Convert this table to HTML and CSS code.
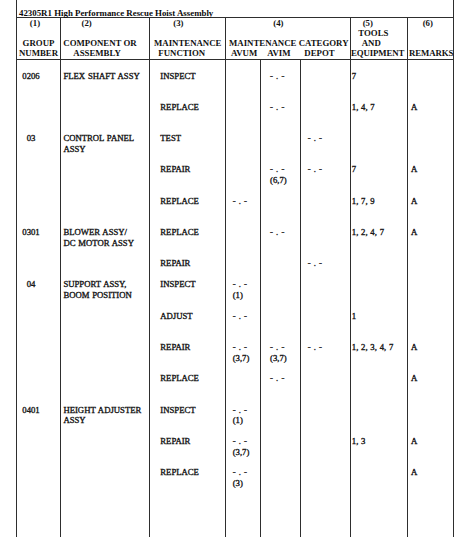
FILE: index.html
```
<!DOCTYPE html>
<html>
<head>
<meta charset="utf-8">
<title>42305R1 High Performance Rescue Hoist Assembly</title>
<link rel="stylesheet" href="styles.css">
</head>
<body>
<div class="sheet">
  <div class="title">42305R1 High Performance Rescue Hoist Assembly</div>
  <div class="head">
    <div class="h h1"><div class="l1">(1)</div><div class="l2"></div><div class="l3">GROUP</div><div class="l4">NUMBER</div></div>
    <div class="h h2"><div class="l1">(2)</div><div class="l2"></div><div class="l3">COMPONENT OR</div><div class="l4">ASSEMBLY</div></div>
    <div class="h h3"><div class="l1">(3)</div><div class="l2"></div><div class="l3">MAINTENANCE</div><div class="l4">FUNCTION</div></div>
    <div class="h h4"><div class="l1">(4)</div><div class="l2"></div><div class="l3">MAINTENANCE CATEGORY</div><div class="l4 subs"><span class="s1">AVUM</span><span class="s2">AVIM</span><span class="s3">DEPOT</span></div></div>
    <div class="h h5"><div class="l1">(5)</div><div class="l2">TOOLS</div><div class="l3">AND</div><div class="l4">EQUIPMENT</div></div>
    <div class="h h6"><div class="l1">(6)</div><div class="l2"></div><div class="l3"></div><div class="l4">REMARKS</div></div>
  </div>
  <div class="body">
    <div class="row">
      <div class="c c1"><span class="num">0206</span></div>
      <div class="c c2">FLEX SHAFT ASSY</div>
      <div class="c c3">INSPECT</div>
      <div class="c c4"></div>
      <div class="c c5">- . -</div>
      <div class="c c6"></div>
      <div class="c c7">7</div>
      <div class="c c8"></div>
    </div>
    <div class="row">
      <div class="c c1"></div>
      <div class="c c2"></div>
      <div class="c c3">REPLACE</div>
      <div class="c c4"></div>
      <div class="c c5">- . -</div>
      <div class="c c6"></div>
      <div class="c c7">1, 4, 7</div>
      <div class="c c8">A</div>
    </div>
    <div class="row">
      <div class="c c1"><span class="num">03</span></div>
      <div class="c c2">CONTROL PANEL<br>ASSY</div>
      <div class="c c3">TEST</div>
      <div class="c c4"></div>
      <div class="c c5"></div>
      <div class="c c6">- . -</div>
      <div class="c c7"></div>
      <div class="c c8"></div>
    </div>
    <div class="row">
      <div class="c c1"></div>
      <div class="c c2"></div>
      <div class="c c3">REPAIR</div>
      <div class="c c4"></div>
      <div class="c c5">- . -<br>(6,7)</div>
      <div class="c c6">- . -</div>
      <div class="c c7">7</div>
      <div class="c c8">A</div>
    </div>
    <div class="row">
      <div class="c c1"></div>
      <div class="c c2"></div>
      <div class="c c3">REPLACE</div>
      <div class="c c4">- . -</div>
      <div class="c c5"></div>
      <div class="c c6"></div>
      <div class="c c7">1, 7, 9</div>
      <div class="c c8">A</div>
    </div>
    <div class="row">
      <div class="c c1"><span class="num">0301</span></div>
      <div class="c c2">BLOWER ASSY/<br>DC MOTOR ASSY</div>
      <div class="c c3">REPLACE</div>
      <div class="c c4"></div>
      <div class="c c5">- . -</div>
      <div class="c c6"></div>
      <div class="c c7">1, 2, 4, 7</div>
      <div class="c c8">A</div>
    </div>
    <div class="row short">
      <div class="c c1"></div>
      <div class="c c2"></div>
      <div class="c c3">REPAIR</div>
      <div class="c c4"></div>
      <div class="c c5"></div>
      <div class="c c6">- . -</div>
      <div class="c c7"></div>
      <div class="c c8"></div>
    </div>
    <div class="row">
      <div class="c c1"><span class="num">04</span></div>
      <div class="c c2">SUPPORT ASSY,<br>BOOM POSITION</div>
      <div class="c c3">INSPECT</div>
      <div class="c c4">- . -<br>(1)</div>
      <div class="c c5"></div>
      <div class="c c6"></div>
      <div class="c c7"></div>
      <div class="c c8"></div>
    </div>
    <div class="row">
      <div class="c c1"></div>
      <div class="c c2"></div>
      <div class="c c3">ADJUST</div>
      <div class="c c4">- . -</div>
      <div class="c c5"></div>
      <div class="c c6"></div>
      <div class="c c7">1</div>
      <div class="c c8"></div>
    </div>
    <div class="row">
      <div class="c c1"></div>
      <div class="c c2"></div>
      <div class="c c3">REPAIR</div>
      <div class="c c4">- . -<br>(3,7)</div>
      <div class="c c5">- . -<br>(3,7)</div>
      <div class="c c6">- . -</div>
      <div class="c c7">1, 2, 3, 4, 7</div>
      <div class="c c8">A</div>
    </div>
    <div class="row">
      <div class="c c1"></div>
      <div class="c c2"></div>
      <div class="c c3">REPLACE</div>
      <div class="c c4"></div>
      <div class="c c5">- . -</div>
      <div class="c c6"></div>
      <div class="c c7"></div>
      <div class="c c8">A</div>
    </div>
    <div class="row">
      <div class="c c1"><span class="num">0401</span></div>
      <div class="c c2">HEIGHT ADJUSTER<br>ASSY</div>
      <div class="c c3">INSPECT</div>
      <div class="c c4">- . -<br>(1)</div>
      <div class="c c5"></div>
      <div class="c c6"></div>
      <div class="c c7"></div>
      <div class="c c8"></div>
    </div>
    <div class="row">
      <div class="c c1"></div>
      <div class="c c2"></div>
      <div class="c c3">REPAIR</div>
      <div class="c c4">- . -<br>(3,7)</div>
      <div class="c c5"></div>
      <div class="c c6"></div>
      <div class="c c7">1, 3</div>
      <div class="c c8">A</div>
    </div>
    <div class="row">
      <div class="c c1"></div>
      <div class="c c2"></div>
      <div class="c c3">REPLACE</div>
      <div class="c c4">- . -<br>(3)</div>
      <div class="c c5"></div>
      <div class="c c6"></div>
      <div class="c c7"></div>
      <div class="c c8">A</div>
    </div>
    <div class="row fill">
      <div class="c c1"></div>
      <div class="c c2"></div>
      <div class="c c3"></div>
      <div class="c c4"></div>
      <div class="c c5"></div>
      <div class="c c6"></div>
      <div class="c c7"></div>
      <div class="c c8"></div>
    </div>
  </div>
</div>
</body>
</html>
```

FILE: styles.css
```
* {
  box-sizing: border-box;
  margin: 0;
  padding: 0;
}

html, body {
  background: #ffffff;
}

body {
  margin: 0;
  font-family: "Liberation Serif", "Times New Roman", serif;
  color: #151515;
}

.sheet {
  margin-left: 16px;
  width: 438px;
  height: 537px;
  border-left: 1px solid #2e2e2e;
  border-right: 1px solid #2e2e2e;
}

.title {
  height: 18px;
  padding: 7.6px 0 0 2px;
  border-bottom: 1px solid #2e2e2e;
  font-weight: bold;
  font-size: 8.85px;
  line-height: 10px;
  white-space: nowrap;
  color: #0c0c0c;
}

/* header */
.head {
  display: grid;
  grid-template-columns: 44px 89px 76px 125px 57px 45px;
  height: 42px;
  border-bottom: 1px solid #2e2e2e;
}

.h {
  border-right: 1px solid #2e2e2e;
  font-weight: bold;
  font-size: 8.8px;
  line-height: 10px;
  padding-top: 0.3px;
  white-space: nowrap;
  color: #111;
}

.h6 {
  border-right: none;
}

.h > div {
  height: 10px;
}

.h1 {
  text-align: center;
}
.h1 .l1 { padding-right: 7px; }

.h2 .l1 { padding-left: 20.5px; }
.h2 .l3 { padding-left: 2.3px; }
.h2 .l4 { padding-left: 12.3px; }

.h3 .l1 { padding-left: 23.3px; }
.h3 .l3 { padding-left: 4px; }
.h3 .l4 { padding-left: 8.3px; }

.h4 .l1 { padding-left: 47.3px; }
.h4 .l3 { padding-left: 3px; }

.subs {
  display: flex;
}
.subs .s1 { width: 35px; padding-left: 5px; }
.subs .s2 { width: 40px; padding-left: 6.3px; }
.subs .s3 { padding-left: 3.3px; }

.h5 .l1 { padding-left: 11.7px; }
.h5 .l2 { padding-left: 7.3px; }
.h5 .l3 { padding-left: 10.7px; }
.h5 .l4 { padding-left: 0; letter-spacing: -0.1px; }

.h6 .l1 { padding-left: 14.7px; }
.h6 .l4 { padding-left: 1.1px; letter-spacing: -0.1px; }

/* body */
.row {
  display: grid;
  grid-template-columns: 44px 89px 76px 35px 40px 50px 57px 45px;
  height: 31.3px;
}

.row.short {
  height: 21px;
}

.row.fill {
  height: 49.1px;
}

.c {
  border-right: 1px solid #2e2e2e;
  padding-top: 10.6px;
  font-size: 8.7px;
  line-height: 10.7px;
  white-space: nowrap;
  word-spacing: 0.6px;
  -webkit-text-stroke: 0.35px #151515;
}

.c8 {
  border-right: none;
}

.c1 { padding-left: 5px; }
.num {
  display: inline-block;
  width: 18px;
  text-align: center;
}

.c2 { padding-left: 2.4px; }
.c3 { padding-left: 10.3px; }
.c4, .c5, .c6 { word-spacing: 1px; }
.c4 { padding-left: 6.7px; }
.c5 { padding-left: 9px; }
.c6 { padding-left: 6.7px; }
.c7 { padding-left: 0.8px; }
.c8 { padding-left: 3px; }
```
